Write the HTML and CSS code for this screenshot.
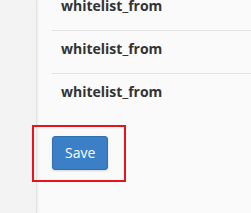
FILE: index.html
```html
<!DOCTYPE html>
<html>
<head>
<meta charset="utf-8">
<link rel="stylesheet" href="styles.css">
</head>
<body>
<div class="layout">
  <aside class="sidebar"></aside>
  <main class="main">
    <ul class="list">
      <li class="row">whitelist_from</li>
      <li class="row">whitelist_from</li>
      <li class="row last">whitelist_from</li>
    </ul>
    <div class="actions">
      <button class="btn">Save</button>
      <span class="highlight"></span>
    </div>
  </main>
</div>
</body>
</html>
```
FILE: styles.css
```css
html, body {
  margin: 0;
  padding: 0;
  height: 100%;
  overflow: hidden;
  background: #fafafa;
}
.layout {
  display: flex;
  height: 100%;
  font-family: "Open Sans", "Liberation Sans", sans-serif;
}
.sidebar {
  width: 36px;
  flex: none;
  background: #f3f3f3;
  border-right: 1px solid #e2e2e2;
  box-shadow: 1px 0 3px rgba(0,0,0,0.06);
}
.main {
  flex: 1;
  padding-left: 15px;
}
.list {
  list-style: none;
  margin: -12px 0 0 0;
  padding: 0;
}
.row {
  font-size: 14px;
  font-weight: 700;
  line-height: 20px;
  color: #333;
  padding: 8px 0 14px 9px;
  border-bottom: 1px solid #e3e3e3;
}
.row.last {
  border-bottom: none;
}
.actions {
  position: relative;
  margin-top: 20px;
}
.btn {
  font-family: "Open Sans", "Liberation Sans", sans-serif;
  font-size: 14px;
  line-height: 20px;
  color: #fff;
  background: #3b80c6;
  border: 1px solid #3170b0;
  border-radius: 3px;
  padding: 6px 12px;
  width: 56px;
  height: 34px;
  box-shadow: 0 1px 2px rgba(0,0,0,0.15);
}
.highlight {
  position: absolute;
  left: -20px;
  top: -11px;
  width: 90px;
  height: 53px;
  border: 2px solid #e8141c;
}
```
